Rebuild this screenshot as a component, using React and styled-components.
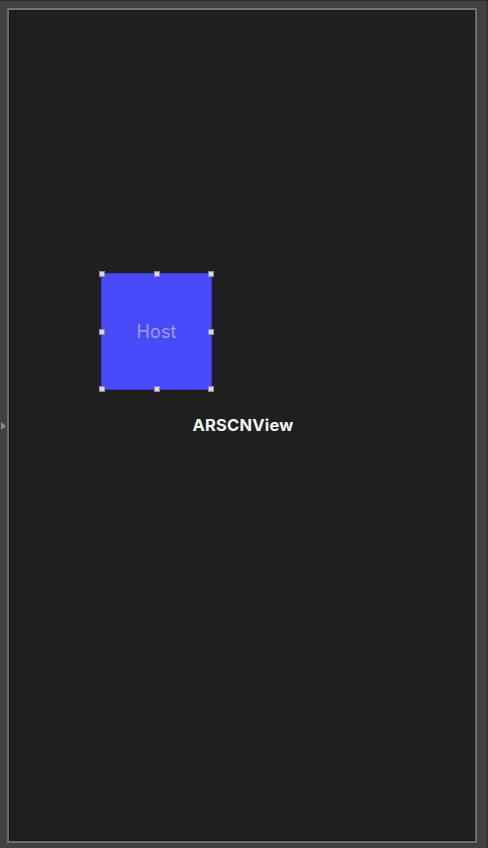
import React from "react";
import styled, { createGlobalStyle } from "styled-components";

const Global = createGlobalStyle`
  html, body { margin: 0; padding: 0; background: #3f3f3f; }
  body { font-family: Inter, "Liberation Sans", sans-serif; }
`;

const Device = styled.div`
  position: relative;
  width: 488px;
  height: 848px;
  box-sizing: border-box;
  padding: 7px 10px 5px 7px;
  background: #414141;
  border-top: 1px solid #2e2e2e;
  border-right: 1px solid #2e2e2e;
  display: flex;
`;

const Screen = styled.div`
  position: relative;
  flex: 1;
  border: 2px solid #6c6c6c;
  border-top-color: #767676;
  background: #1f1f1f;
  box-shadow: inset 0 0 0 1px #161616;
  overflow: hidden;
`;

const SideArrow = styled.div`
  position: absolute;
  left: 1px;
  top: 421px;
  width: 0;
  height: 0;
  border-top: 4px solid transparent;
  border-bottom: 4px solid transparent;
  border-left: 5px solid #8a8a8a;
`;

const HostView = styled.div`
  position: absolute;
  left: ${(p) => p.$x}px;
  top: ${(p) => p.$y}px;
  width: ${(p) => p.$w}px;
  height: ${(p) => p.$h}px;
  box-sizing: border-box;
  background: #4a4afd;
  border: 1px solid #3a3ad0;
  display: flex;
  align-items: center;
  justify-content: center;
`;

const HostLabel = styled.span`
  font-family: Inter, "Liberation Sans", sans-serif;
  font-size: 18px;
  color: #9d9de6;
  letter-spacing: 0.1px;
`;

const Handle = styled.span`
  position: absolute;
  width: 6px;
  height: 6px;
  box-sizing: border-box;
  background: #d9d9e2;
  border: 1px solid #8d8d99;
  left: ${(p) => p.$l};
  top: ${(p) => p.$t};
  transform: translate(-50%, -50%);
`;

const ViewName = styled.div`
  position: absolute;
  left: ${(p) => p.$x}px;
  top: ${(p) => p.$y}px;
  transform: translateX(-50%);
  font-family: Inter, "Liberation Sans", sans-serif;
  font-weight: 700;
  font-size: 16.5px;
  letter-spacing: 0.2px;
  color: #f4f4f4;
  white-space: nowrap;
`;

const handles = [
  ["0%", "0%"], ["50%", "0%"], ["100%", "0%"],
  ["0%", "50%"], ["100%", "50%"],
  ["0%", "100%"], ["50%", "100%"], ["100%", "100%"],
];

export default function App() {
  return (
    <>
      <Global />
      <Device>
        <SideArrow />
        <Screen>
          <HostView $x={92} $y={263} $w={111} $h={117}>
            <HostLabel>Host</HostLabel>
            {handles.map(([l, t], i) => (
              <Handle key={i} $l={l} $t={t} />
            ))}
          </HostView>
          <ViewName $x={234} $y={405}>ARSCNView</ViewName>
        </Screen>
      </Device>
    </>
  );
}
